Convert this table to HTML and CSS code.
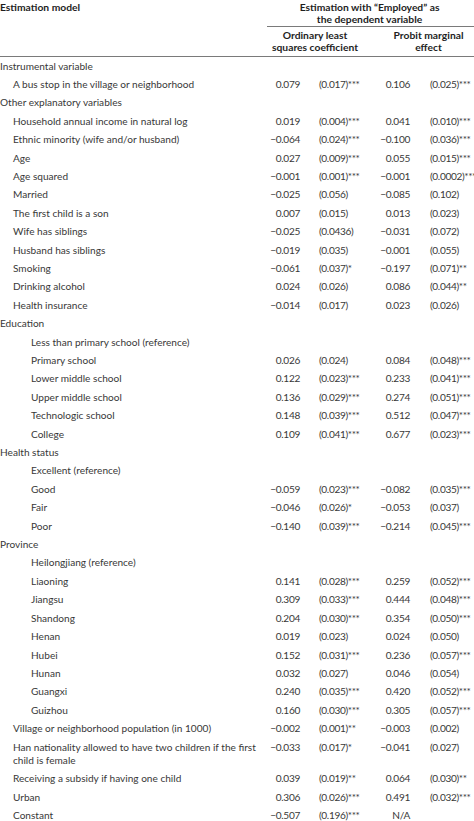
FILE: index.html
```html
<!DOCTYPE html>
<html lang="en">
<head>
<meta charset="utf-8">
<title>Estimation table</title>
<link rel="stylesheet" href="styles.css">
</head>
<body>
<table class="est">
  <colgroup>
    <col class="c-label">
    <col class="c-ols">
    <col class="c-olsse">
    <col class="c-pr">
    <col class="c-prse">
  </colgroup>
  <thead>
    <tr>
      <th class="model" rowspan="2">Estimation model</th>
      <th class="top" colspan="4">Estimation with “Employed” as<br>the dependent variable</th>
    </tr>
    <tr>
      <th class="grp ols" colspan="2">Ordinary least<br>squares coefficient</th>
      <th class="grp probit" colspan="2">Probit marginal<br>effect</th>
    </tr>
  </thead>
  <tbody>
    <tr><td class="lab g">Instrumental variable</td><td></td><td></td><td></td><td></td></tr>
    <tr><td class="lab s">A bus stop in the village or neighborhood</td><td class="cf">0.079</td><td class="se">(0.017)***</td><td class="cf p">0.106</td><td class="se">(0.025)***</td></tr>
    <tr><td class="lab g">Other explanatory variables</td><td></td><td></td><td></td><td></td></tr>
    <tr><td class="lab s">Household annual income in natural log</td><td class="cf">0.019</td><td class="se">(0.004)***</td><td class="cf p">0.041</td><td class="se">(0.010)***</td></tr>
    <tr><td class="lab s">Ethnic minority (wife and/or husband)</td><td class="cf">−0.064</td><td class="se">(0.024)***</td><td class="cf p">−0.100</td><td class="se">(0.036)***</td></tr>
    <tr><td class="lab s">Age</td><td class="cf">0.027</td><td class="se">(0.009)***</td><td class="cf p">0.055</td><td class="se">(0.015)***</td></tr>
    <tr><td class="lab s">Age squared</td><td class="cf">−0.001</td><td class="se">(0.001)***</td><td class="cf p">−0.001</td><td class="se">(0.0002)***</td></tr>
    <tr><td class="lab s">Married</td><td class="cf">−0.025</td><td class="se">(0.056)</td><td class="cf p">−0.085</td><td class="se">(0.102)</td></tr>
    <tr><td class="lab s">The first child is a son</td><td class="cf">0.007</td><td class="se">(0.015)</td><td class="cf p">0.013</td><td class="se">(0.023)</td></tr>
    <tr><td class="lab s">Wife has siblings</td><td class="cf">−0.025</td><td class="se">(0.0436)</td><td class="cf p">−0.031</td><td class="se">(0.072)</td></tr>
    <tr><td class="lab s">Husband has siblings</td><td class="cf">−0.019</td><td class="se">(0.035)</td><td class="cf p">−0.001</td><td class="se">(0.055)</td></tr>
    <tr><td class="lab s">Smoking</td><td class="cf">−0.061</td><td class="se">(0.037)*</td><td class="cf p">−0.197</td><td class="se">(0.071)**</td></tr>
    <tr><td class="lab s">Drinking alcohol</td><td class="cf">0.024</td><td class="se">(0.026)</td><td class="cf p">0.086</td><td class="se">(0.044)**</td></tr>
    <tr><td class="lab s">Health insurance</td><td class="cf">−0.014</td><td class="se">(0.017)</td><td class="cf p">0.023</td><td class="se">(0.026)</td></tr>
    <tr><td class="lab g">Education</td><td></td><td></td><td></td><td></td></tr>
    <tr><td class="lab ss">Less than primary school (reference)</td><td></td><td></td><td></td><td></td></tr>
    <tr><td class="lab ss">Primary school</td><td class="cf">0.026</td><td class="se">(0.024)</td><td class="cf p">0.084</td><td class="se">(0.048)***</td></tr>
    <tr><td class="lab ss">Lower middle school</td><td class="cf">0.122</td><td class="se">(0.023)***</td><td class="cf p">0.233</td><td class="se">(0.041)***</td></tr>
    <tr><td class="lab ss">Upper middle school</td><td class="cf">0.136</td><td class="se">(0.029)***</td><td class="cf p">0.274</td><td class="se">(0.051)***</td></tr>
    <tr><td class="lab ss">Technologic school</td><td class="cf">0.148</td><td class="se">(0.039)***</td><td class="cf p">0.512</td><td class="se">(0.047)***</td></tr>
    <tr><td class="lab ss">College</td><td class="cf">0.109</td><td class="se">(0.041)***</td><td class="cf p">0.677</td><td class="se">(0.023)***</td></tr>
    <tr><td class="lab g">Health status</td><td></td><td></td><td></td><td></td></tr>
    <tr><td class="lab ss">Excellent (reference)</td><td></td><td></td><td></td><td></td></tr>
    <tr><td class="lab ss">Good</td><td class="cf">−0.059</td><td class="se">(0.023)***</td><td class="cf p">−0.082</td><td class="se">(0.035)***</td></tr>
    <tr><td class="lab ss">Fair</td><td class="cf">−0.046</td><td class="se">(0.026)*</td><td class="cf p">−0.053</td><td class="se">(0.037)</td></tr>
    <tr><td class="lab ss">Poor</td><td class="cf">−0.140</td><td class="se">(0.039)***</td><td class="cf p">−0.214</td><td class="se">(0.045)***</td></tr>
    <tr><td class="lab g">Province</td><td></td><td></td><td></td><td></td></tr>
    <tr><td class="lab ss">Heilongjiang (reference)</td><td></td><td></td><td></td><td></td></tr>
    <tr><td class="lab ss">Liaoning</td><td class="cf">0.141</td><td class="se">(0.028)***</td><td class="cf p">0.259</td><td class="se">(0.052)***</td></tr>
    <tr><td class="lab ss">Jiangsu</td><td class="cf">0.309</td><td class="se">(0.033)***</td><td class="cf p">0.444</td><td class="se">(0.048)***</td></tr>
    <tr><td class="lab ss">Shandong</td><td class="cf">0.204</td><td class="se">(0.030)***</td><td class="cf p">0.354</td><td class="se">(0.050)***</td></tr>
    <tr><td class="lab ss">Henan</td><td class="cf">0.019</td><td class="se">(0.023)</td><td class="cf p">0.024</td><td class="se">(0.050)</td></tr>
    <tr><td class="lab ss">Hubei</td><td class="cf">0.152</td><td class="se">(0.031)***</td><td class="cf p">0.236</td><td class="se">(0.057)***</td></tr>
    <tr><td class="lab ss">Hunan</td><td class="cf">0.032</td><td class="se">(0.027)</td><td class="cf p">0.046</td><td class="se">(0.054)</td></tr>
    <tr><td class="lab ss">Guangxi</td><td class="cf">0.240</td><td class="se">(0.035)***</td><td class="cf p">0.420</td><td class="se">(0.052)***</td></tr>
    <tr><td class="lab ss">Guizhou</td><td class="cf">0.160</td><td class="se">(0.030)***</td><td class="cf p">0.305</td><td class="se">(0.057)***</td></tr>
    <tr><td class="lab s">Village or neighborhood population (in 1000)</td><td class="cf">−0.002</td><td class="se">(0.001)**</td><td class="cf p">−0.003</td><td class="se">(0.002)</td></tr>
    <tr><td class="lab s">Han nationality allowed to have two children if the first child is female</td><td class="cf">−0.033</td><td class="se">(0.017)*</td><td class="cf p">−0.041</td><td class="se">(0.027)</td></tr>
    <tr><td class="lab s">Receiving a subsidy if having one child</td><td class="cf">0.039</td><td class="se">(0.019)**</td><td class="cf p">0.064</td><td class="se">(0.030)**</td></tr>
    <tr><td class="lab s">Urban</td><td class="cf">0.306</td><td class="se">(0.026)***</td><td class="cf p">0.491</td><td class="se">(0.032)***</td></tr>
    <tr><td class="lab s">Constant</td><td class="cf">−0.507</td><td class="se">(0.196)***</td><td class="cf p">N/A</td><td class="se"></td></tr>
  </tbody>
</table>
</body>
</html>
```

FILE: styles.css
```css
html, body {
  margin: 0;
  padding: 0;
  background: #ffffff;
  overflow: hidden;
}

body {
  font-family: Lato, "Open Sans", "DejaVu Sans", sans-serif;
  font-size: 10.1px;
  color: #383838;
}

.est {
  border-collapse: separate;
  border-spacing: 0;
  table-layout: fixed;
  width: 487px;
}

.c-label { width: 267px; }
.c-ols { width: 42px; }
.c-olsse { width: 61px; }
.c-pr { width: 50px; }
.c-prse { width: 67px; }

.est th {
  font-weight: 700;
  font-size: 10.3px;
  color: #1e1e1e;
  line-height: 12px;
  padding: 0;
  vertical-align: top;
}

.est th.model {
  text-align: left;
  padding-top: 1px;
  border-bottom: 1px solid #7a7a7a;
}

.est th.top {
  text-align: center;
  padding: 1px 15px 1px 0;
  border-bottom: 1px solid #7a7a7a;
}

.est th.grp {
  text-align: center;
  padding-top: 2px;
  padding-bottom: 3px;
  border-bottom: 1px solid #7a7a7a;
}

.est th.ols {
  padding-right: 7px;
}

.est td {
  padding: 2.5px 0;
  line-height: 13.4px;
  vertical-align: top;
}

.lab.g { padding-left: 0; }
.lab.s { padding-left: 13px; padding-right: 0; }
.lab.ss { padding-left: 31px; }

.cf {
  text-align: right;
  padding-right: 9px !important;
  white-space: nowrap;
  letter-spacing: -0.3px;
}

.cf.p {
  padding-right: 10px !important;
}

.se {
  text-align: left;
  padding-left: 10px !important;
  white-space: nowrap;
  letter-spacing: -0.35px;
}
```
